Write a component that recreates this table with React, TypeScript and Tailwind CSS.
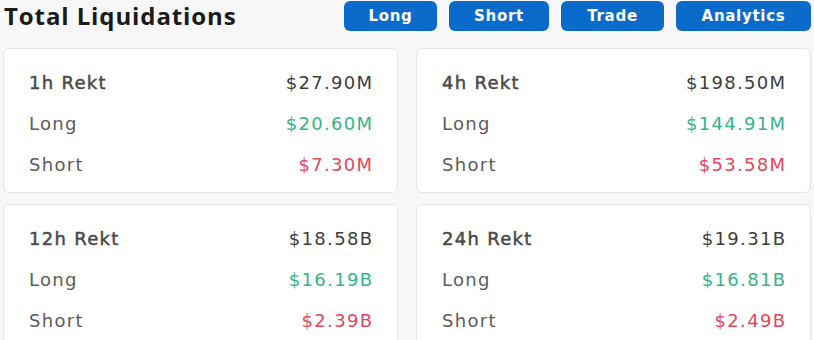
import React from "react";

type Card = { label: string; total: string; long: string; short: string };

const cards: Card[] = [
  { label: "1h Rekt", total: "$27.90M", long: "$20.60M", short: "$7.30M" },
  { label: "4h Rekt", total: "$198.50M", long: "$144.91M", short: "$53.58M" },
  { label: "12h Rekt", total: "$18.58B", long: "$16.19B", short: "$2.39B" },
  { label: "24h Rekt", total: "$19.31B", long: "$16.81B", short: "$2.49B" },
];

function StatCard({ c }: { c: Card }) {
  return (
    <div className="bg-white border border-[#e6e6e6] rounded-[6px] pl-[25px] pr-[25px] pt-[18px] pb-[13px] h-[145px] text-[18px] tracking-[1.3px]">
      <div className="flex justify-between items-center h-[30px]">
        <span className="text-[#4a4a4a] [-webkit-text-stroke:0.5px_#4a4a4a]">{c.label}</span>
        <span className="text-[#3d3d3d] -mr-[1.3px]">{c.total}</span>
      </div>
      <div className="flex justify-between items-center h-[30px] mt-[11px]">
        <span className="text-[#5c5c5c]">Long</span>
        <span className="text-[#37b28a] -mr-[1.3px]">{c.long}</span>
      </div>
      <div className="flex justify-between items-center h-[30px] mt-[11px]">
        <span className="text-[#5c5c5c]">Short</span>
        <span className="text-[#e2475b] -mr-[1.3px]">{c.short}</span>
      </div>
    </div>
  );
}

export default function App() {
  return (
    <div
      className="w-[814px] h-[340px] bg-[#f7f7f7] overflow-hidden pl-[3px] pr-[3px]"
      style={{ fontFamily: '"DejaVu Sans", "Noto Sans", sans-serif' }}
    >
      <div className="flex items-start justify-between h-[33px] pt-[1px]">
        <h1
          className="text-[24px] leading-[30px] font-bold text-[#1a1a1a] ml-[1px] tracking-[0.9px]"
          style={{ fontFamily: '"Open Sans", "Noto Sans", sans-serif' }}
        >
          Total Liquidations
        </h1>
        <div className="flex gap-[12px]">
          {[
            ["Long", "w-[93px]"],
            ["Short", "w-[100px]"],
            ["Trade", "w-[103px]"],
            ["Analytics", "w-[135px]"],
          ].map(([t, w]) => (
            <button
              key={t}
              className={`${w} h-[30px] rounded-[6px] bg-[#0b6bcb] text-white font-bold text-[15px] tracking-[0.7px]`}
            >
              {t}
            </button>
          ))}
        </div>
      </div>
      <div className="grid grid-cols-2 gap-x-[18px] gap-y-[11px] mt-[15px]">
        {cards.map((c) => (
          <StatCard key={c.label} c={c} />
        ))}
      </div>
    </div>
  );
}
